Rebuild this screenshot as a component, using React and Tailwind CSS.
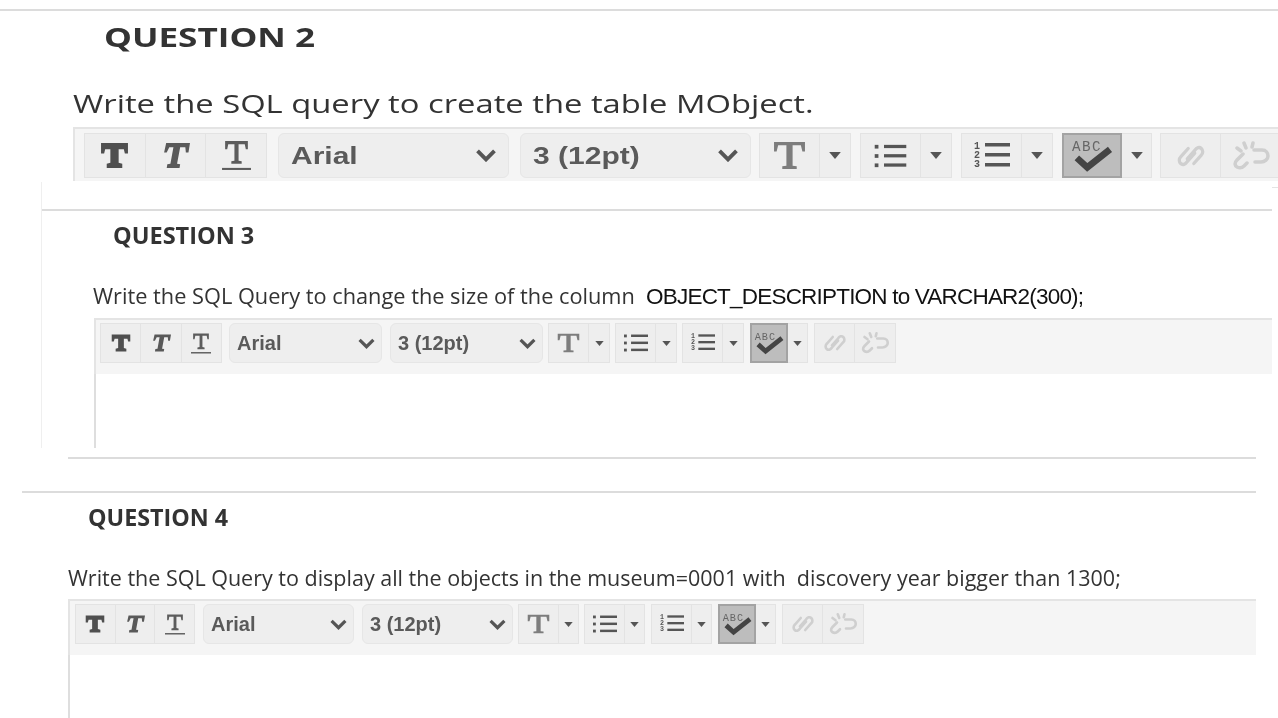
const OPEN = "font-['Open_Sans',sans-serif]";
const ARIAL = "font-['Liberation_Sans',Arial,sans-serif]";
const CELL = "flex items-center justify-center bg-[#eeeeee] border border-[#e3e3e3]";

const Bold = ({ c }) => (
  <svg viewBox="0 0 28 26" className={c} fill="#4f4f4f">
    <path d="M1 1h26v10h-3l-1-4h-5v13l3.500 1v4H6.500v-4l3.500-1V7H5l-1 4H1z" />
  </svg>
);
const Italic = ({ c }) => (
  <svg viewBox="0 0 28 26" className={c} fill="#595959">
    <path d="M5 1h23l-1.500 9h-2.500l-.5-5h-5l-3 16 3 .5-.6 3.500H5.500l.6-3.500 3-.5L12 5H8l-2.500 5H3z" />
  </svg>
);
const Under = ({ c }) => (
  <svg viewBox="0 0 28 30" className={c} fill="#5c5c5c">
    <path d="M3 1h22v8h-2l-1-5h-6v16l3 .5V23H9v-2.500l3-.5V4H6L5 9H3z" />
    <rect x="0" y="27" width="28" height="2" />
  </svg>
);
const Size = ({ c }) => (
  <svg viewBox="0 0 32 28" className={c} fill="#7d7d7d">
    <path d="M1 1h30v9h-2.500l-1.500-6h-8v20l4 .5V27H9v-2.500l4-.5V4H5l-1.500 6H1z" />
  </svg>
);
const Bullets = ({ c }) => (
  <svg viewBox="0 0 34 28" className={c} fill="#555">
    <rect x="0" y="2" width="4" height="4" /><rect x="0" y="12" width="4" height="4" /><rect x="0" y="22" width="4" height="4" />
    <rect x="10" y="2" width="24" height="3.500" /><rect x="10" y="12" width="24" height="3.500" /><rect x="10" y="22" width="24" height="3.500" />
  </svg>
);
const Numbers = ({ c }) => (
  <svg viewBox="0 0 36 30" className={c} fill="#555">
    <text x="0" y="8" fontSize="10" fontWeight="700" fontFamily="Liberation Mono, monospace">1</text>
    <text x="0" y="17" fontSize="10" fontWeight="700" fontFamily="Liberation Mono, monospace">2</text>
    <text x="0" y="26" fontSize="10" fontWeight="700" fontFamily="Liberation Mono, monospace">3</text>
    <rect x="11" y="2" width="25" height="3.500" /><rect x="11" y="12" width="25" height="3.500" /><rect x="11" y="22" width="25" height="3.500" />
  </svg>
);
const Spell = ({ c }) => (
  <svg viewBox="0 0 44 38" className={c}>
    <text x="1" y="14" fontSize="15" letterSpacing="1.500" fill="#666" fontFamily="Liberation Mono, monospace">ABC</text>
    <path d="M6 21l11 10L41 12" fill="none" stroke="#444" strokeWidth="7" />
  </svg>
);
const Chain = ({ c }) => (
  <svg viewBox="0 0 32 32" className={c} fill="none" stroke="#cfcfcf" strokeWidth="3.500" strokeLinecap="round">
    <path d="M12 19l8-9c2-3 5-4 7-2s2 5 0 7l-8 9" />
    <path d="M20 13l-8 9c-2 3-5 4-7 2s-2-5 0-7l8-9" />
  </svg>
);
const Unchain = ({ c }) => (
  <svg viewBox="0 0 40 30" className={c} fill="none" stroke="#cfcfcf" strokeWidth="3.500" strokeLinecap="round">
    <path d="M12 13l-6 6c-3 3-2 6 0 7s5 1 7-1l3-3" />
    <path d="M23 9h8c4 0 6 3 6 6s-3 6-7 6h-6" />
    <path d="M13 2l2 5M6 7l4 3M22 2l-1 4" />
  </svg>
);
const Caret = ({ c }) => (
  <svg viewBox="0 0 10 6" className={c} fill="#555"><path d="M0 0h10L5 6z" /></svg>
);
const Chevron = ({ c }) => (
  <svg viewBox="0 0 16 10" className={c} fill="none" stroke="#555" strokeWidth="3"><path d="M1.500 1.500L8 8l6.500-6.500" /></svg>
);

function Split({ main, caret, icon, caretIcon, h, active }) {
  return (
    <div className={`flex ${h}`}>
      <div className={`${CELL} ${main} ${active ? "!bg-[#bdbdbd] !border-[#a3a3a3] border-2" : ""}`}>{icon}</div>
      <div className={`${CELL} ${caret} border-l-0`}>{caretIcon}</div>
    </div>
  );
}

function Select({ label, w, h, text, chev, pl, pr }) {
  return (
    <div className={`flex items-center justify-between bg-[#eeeeee] border border-[#e6e6e6] rounded-md ${w} ${h} ${pl} ${pr}`}>
      <span className={`${ARIAL} font-bold text-[#5a5a5a] ${text}`}>{label}</span>
      <Chevron c={chev} />
    </div>
  );
}

function Toolbar({ t }) {
  const caretIcon = <Caret c={t.caretI} />;
  return (
    <div className={`flex items-start bg-[#f5f5f5] border-t-2 border-l-2 border-[#e4e4e4] ${t.bar}`}>
      <div className={`flex ${t.h} ${t.group}`}>
        <div className={`${CELL} flex-1`}><Bold c={t.fmt} /></div>
        <div className={`${CELL} flex-1 border-l-0`}><Italic c={t.fmt} /></div>
        <div className={`${CELL} flex-1 border-l-0`}><Under c={t.under} /></div>
      </div>
      <div className={t.sel1m}><Select label="Arial" w={t.sel1} h={t.h} text={t.text} chev={t.chev} pl={t.pl} pr={t.pr} /></div>
      <div className={t.sel2m}><Select label="3 (12pt)" w={t.sel2} h={t.h} text={t.text} chev={t.chev} pl={t.pl} pr={t.pr} /></div>
      <div className={t.m1}><Split main={t.main} caret={t.caret} h={t.h} icon={<Size c={t.sizeI} />} caretIcon={caretIcon} /></div>
      <div className={t.m2}><Split main={t.main} caret={t.caret} h={t.h} icon={<Bullets c={t.listI} />} caretIcon={caretIcon} /></div>
      <div className={t.m3}><Split main={t.main} caret={t.caret} h={t.h} icon={<Numbers c={t.numI} />} caretIcon={caretIcon} /></div>
      <div className={t.m4}><Split main={t.spell} caret={t.spellC} h={t.h} active icon={<Spell c={t.spellI} />} caretIcon={caretIcon} /></div>
      <div className={`flex ${t.h} ${t.m5} shrink-0`}>
        <div className={`${CELL} ${t.link}`}><Chain c={t.chainI} /></div>
        <div className={`${CELL} ${t.link} border-l-0`}><Unchain c={t.unI} /></div>
      </div>
    </div>
  );
}

const big = {
  bar: "w-[1205px] h-[54px] pl-[9px] pt-[4px] overflow-hidden", h: "h-[45px]", group: "w-[183px] shrink-0",
  fmt: "w-[29px] h-[27px]", under: "w-[29px] h-[31px]",
  sel1m: "ml-[11px]", sel2m: "ml-[11px]", sel1: "w-[231px]", sel2: "w-[231px]",
  text: "text-[24px] inline-block origin-left scale-x-[1.25]", chev: "w-[22px] h-[13px]", pl: "pl-[12px]", pr: "pr-[11px]",
  m1: "ml-[8px]", m2: "ml-[9px]", m3: "ml-[9px]", m4: "ml-[9px]",
  main: "w-[61px]", caret: "w-[31px]", spell: "w-[60px]", spellC: "w-[30px]", m5: "ml-[8px]", link: "w-[61px]",
  caretI: "w-[12px] h-[7px]", sizeI: "w-[33px] h-[29px]", listI: "w-[35px] h-[26px]", numI: "w-[36px] h-[30px]",
  spellI: "w-[42px] h-[36px]", chainI: "w-[34px] h-[30px]", unI: "w-[42px] h-[30px]",
};
const small = {
  h: "h-[40px]", fmt: "w-[20px] h-[20px]", under: "w-[20px] h-[23px]",
  text: "text-[20px]", chev: "w-[17px] h-[11px]", pl: "pl-[7px]", pr: "pr-[6px]",
  caretI: "w-[9px] h-[5px]", sizeI: "w-[23px] h-[22px]", listI: "w-[24px] h-[20px]", numI: "w-[24px] h-[20px]",
  spellI: "w-[30px] h-[28px]", chainI: "w-[24px] h-[24px]", unI: "w-[30px] h-[24px]",
};
const q3 = {
  ...small, bar: "w-[1178px] h-[56px] pl-[4px] pt-[3px]", group: "w-[122px] shrink-0",
  sel1m: "ml-[7px]", sel2m: "ml-[8px]", sel1: "w-[153px]", sel2: "w-[153px]",
  m1: "ml-[5px]", m2: "ml-[5px]", m3: "ml-[5px]", m4: "ml-[6px]", m5: "ml-[6px]",
  main: "w-[41px]", caret: "w-[21px]", spell: "w-[38px]", spellC: "w-[20px]", link: "w-[41px]",
};
const q4 = {
  ...small, bar: "w-[1188px] h-[56px] pl-[5px] pt-[3px]", group: "w-[120px] shrink-0",
  sel1m: "ml-[8px]", sel2m: "ml-[8px]", sel1: "w-[151px]", sel2: "w-[151px]",
  m1: "ml-[5px]", m2: "ml-[5px]", m3: "ml-[6px]", m4: "ml-[6px]", m5: "ml-[6px]",
  main: "w-[41px]", caret: "w-[20px]", spell: "w-[38px]", spellC: "w-[20px]", link: "w-[41px]",
};

export default function App() {
  return (
    <div className={`w-[1278px] h-[718px] overflow-hidden bg-white ${OPEN} blur-[0.4px]`}>
      {/* Question 2 */}
      <section className="h-[182px] pt-[9px]">
        <div className="h-[2px] bg-[#dcdcdc]" />
        <h2 className="pl-[104px] pt-[7px] h-[70px] text-[27px] leading-[37px] font-bold text-[#333]">
          <span className="inline-block origin-left scale-x-[1.3]">QUESTION 2</span>
        </h2>
        <p className="pl-[73px] h-[46px] text-[26px] leading-[44px] text-[#333]">
          <span className="inline-block origin-left scale-x-[1.26]">Write the SQL query to create the table MObject.</span>
        </p>
        <div className="pl-[73px]"><Toolbar t={big} /></div>
        <div className="ml-[1272px] mt-[6px] w-[6px] h-[1px] bg-[#e4e4e4]" />
      </section>

      {/* Question 3 */}
      <section className="ml-[41px] w-[1231px] h-[266px] pt-[27px] border-l border-[#efefef]">
        <div className="h-[2px] bg-[#dcdcdc]" />
        <h2 className="pl-[71px] pt-[9px] h-[63px] text-[23.500px] leading-[30px] font-bold text-[#333]">QUESTION 3</h2>
        <p className="pl-[51px] h-[44px] text-[21.750px] leading-[44px] text-[#333] whitespace-pre">
          {"Write the SQL Query to change the size of the column  "}
          <span className={`${ARIAL} text-[22.500px] tracking-[-0.8px] text-[#111]`}>OBJECT_DESCRIPTION to VARCHAR2(300);</span>
        </p>
        <div className="ml-[52px] border-l-2 border-[#dedede] h-[130px]"><div className="-ml-[2px]"><Toolbar t={q3} /></div></div>
      </section>

      {/* Divider */}
      <div className="ml-[68px] w-[1188px] h-[2px] mt-[9px] bg-[#dcdcdc]" />

      {/* Question 4 */}
      <section className="ml-[22px] w-[1234px] mt-[32px]">
        <div className="h-[2px] bg-[#dcdcdc]" />
        <h2 className="pl-[66px] pt-[9px] h-[62px] text-[23.300px] leading-[30px] font-bold text-[#333]">QUESTION 4</h2>
        <p className="pl-[46px] h-[44px] text-[21.5px] leading-[46px] text-[#333] whitespace-pre">Write the SQL Query to display all the objects in the museum=0001 with  discovery year bigger than 1300;</p>
        <div className="ml-[46px] border-l-2 border-[#dedede] h-[120px]"><div className="-ml-[2px]"><Toolbar t={q4} /></div></div>
      </section>
    </div>
  );
}
